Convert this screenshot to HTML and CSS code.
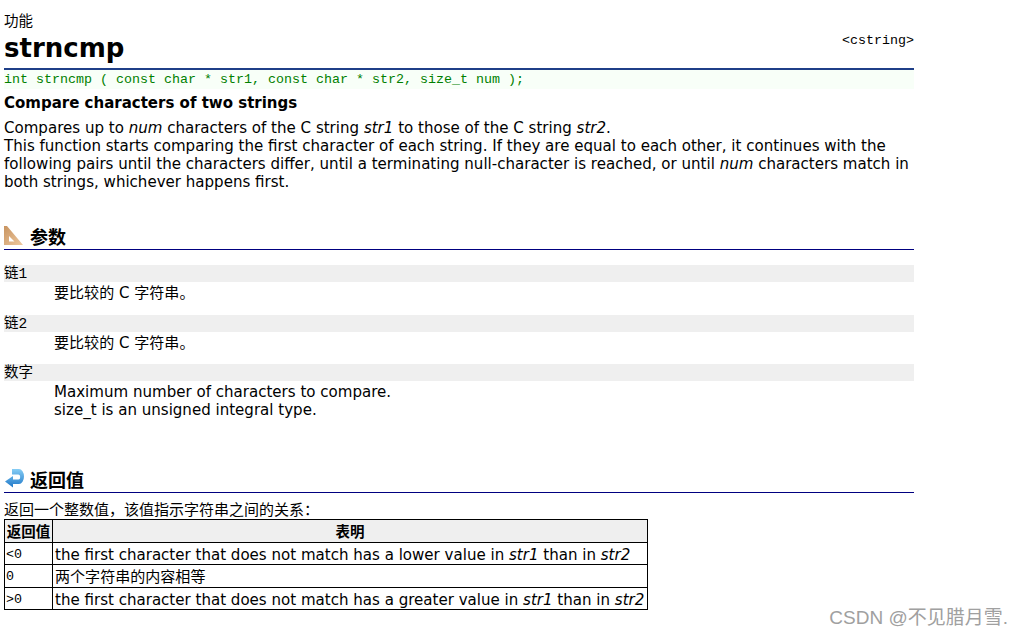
FILE: index.html
```html
<html>
<head>
  <meta charset="utf-8">
  <link rel="stylesheet" href="styles.css">
</head>

<body>
  <div class="page">
    <div class="kind">功能</div>
    <div class="title-row">
      <h1>strncmp</h1>
      <div class="header-name">&lt;cstring&gt;</div>
    </div>
    <div class="proto">int strncmp ( const char * str1, const char * str2, size_t num );</div>
    <div class="summary">Compare characters of two strings</div>
    <div class="desc">
      Compares up to <i>num</i> characters of the C string <i>str1</i> to those of the C string <i>str2</i>.<br>
      This function starts comparing the first character of each string. If they are equal to each other, it continues with the following pairs until the characters differ, until a terminating null-character is reached, or until <i>num</i> characters match in both strings, whichever happens first.
    </div>

    <h2 class="section section-params">
      <svg class="section-icon" width="20" height="20" viewBox="0 0 20 20">
        <defs>
          <linearGradient id="ruler" x1="0" y1="0" x2="1" y2="1">
            <stop offset="0" stop-color="#c8935f"/>
            <stop offset="1" stop-color="#eec9a0"/>
          </linearGradient>
        </defs>
        <path d="M0 0 L3 0 L19 19 L0 19 Z M5 10 L5 15.500 L10.500 15.500 Z" fill="url(#ruler)" fill-rule="evenodd"/>
      </svg>
      参数
    </h2>
    <dl class="params">
      <dt>链1</dt>
      <dd>要比较的 C 字符串。</dd>
      <dt>链2</dt>
      <dd>要比较的 C 字符串。</dd>
      <dt>数字</dt>
      <dd>Maximum number of characters to compare.<br>size_t is an unsigned integral type.</dd>
    </dl>

    <h2 class="section section-return">
      <svg class="section-icon" width="20" height="20" viewBox="0 0 20 20">
        <defs>
          <linearGradient id="arrow" x1="0" y1="0" x2="0" y2="1">
            <stop offset="0" stop-color="#86cdf5"/>
            <stop offset="1" stop-color="#1f78c8"/>
          </linearGradient>
        </defs>
        <path d="M8 0 H15 A5 7.500 0 0 1 15 15 H9 V18.500 L1 12.500 L9 7 V10.500 H14.500 A1.500 2.200 0 0 0 14.500 5.500 H8 Z" fill="url(#arrow)"/>
      </svg>
      返回值
    </h2>
    <div class="return-intro">返回一个整数值，该值指示字符串之间的关系：</div>
    <table class="return-table">
      <tr><th class="col-value">返回值</th><th>表明</th></tr>
      <tr><td class="code">&lt;0</td><td>the first character that does not match has a lower value in <i>str1</i> than in <i>str2</i></td></tr>
      <tr class="row-tall"><td class="code">0</td><td>两个字符串的内容相等</td></tr>
      <tr><td class="code">&gt;0</td><td>the first character that does not match has a greater value in <i>str1</i> than in <i>str2</i></td></tr>
    </table>
  </div>
  <div class="watermark">CSDN @不见腊月雪.</div>
</body>

</html>
```

FILE: styles.css
```css
body {
  margin: 0;
  font-family: "DejaVu Sans", "Noto Sans CJK SC", sans-serif;
  font-size: 15.05px;
  line-height: 18px;
  color: #000;
  background: #fff;
}

.page {
  width: 910px;
  margin-left: 4px;
  padding-top: 12px;
}

.kind {
  font-size: 14.5px;
  line-height: 18px;
}

.title-row {
  display: flex;
  justify-content: space-between;
  border-bottom: 2px solid #1f3f88;
  height: 38px;
}

h1 {
  margin: 0;
  padding-top: 1px;
  font-size: 26px;
  line-height: 34px;
  font-weight: bold;
}

.header-name {
  font-family: "Liberation Mono", monospace;
  font-size: 13.33px;
  padding-top: 2px;
}

.proto {
  font-family: "Liberation Mono", "DejaVu Sans Mono", monospace;
  font-size: 13.33px;
  line-height: 19px;
  color: #008000;
  background: #f8fff8;
}

.summary {
  font-weight: bold;
  font-size: 15px;
  line-height: 18px;
  margin-top: 5px;
}

.desc {
  margin-top: 7px;
}

.section {
  display: flex;
  align-items: center;
  gap: 6px;
  margin: 0;
  padding-top: 2px;
  font-size: 18px;
  line-height: 22px;
  font-weight: bold;
  border-bottom: 1px solid #000080;
}

.section-icon {
  margin-top: -5px;
}

.section-params {
  margin-top: 34px;
}

.section-return {
  margin-top: 49px;
}

.params {
  margin: 15px 0 0;
}

.params dt {
  background: #efefef;
  font-family: "Liberation Mono", "Noto Sans CJK SC", monospace;
  font-size: 14.5px;
  line-height: 15px;
  padding-top: 2px;
}

.params dd {
  margin: 0 0 12.500px 50px;
  padding-top: 2px;
  line-height: 18px;
}

.return-intro {
  font-size: 15px;
  line-height: 18px;
  margin-top: 8px;
}

.return-table {
  border-collapse: collapse;
  width: 644px;
  font-size: 15.05px;
}

.return-table th,
.return-table td {
  border: 1px solid #000;
  padding: 2px 0 0 2px;
  height: 22px;
  line-height: 18px;
  text-align: left;
  white-space: nowrap;
}

.return-table th {
  background: #efefef;
  font-size: 14.5px;
  text-align: center;
  height: 23px;
  padding: 2px 1px 0;
}

.return-table .row-tall td {
  height: 23px;
}

.col-value {
  width: 45px;
}

.return-table .code {
  font-family: "Liberation Mono", monospace;
  font-size: 13.33px;
  padding-left: 1px;
}

.watermark {
  position: absolute;
  right: 14px;
  top: 607px;
  font-family: "Liberation Sans", "Noto Sans CJK SC", sans-serif;
  font-size: 19px;
  line-height: 22px;
  color: #a0a0a0;
}
```
